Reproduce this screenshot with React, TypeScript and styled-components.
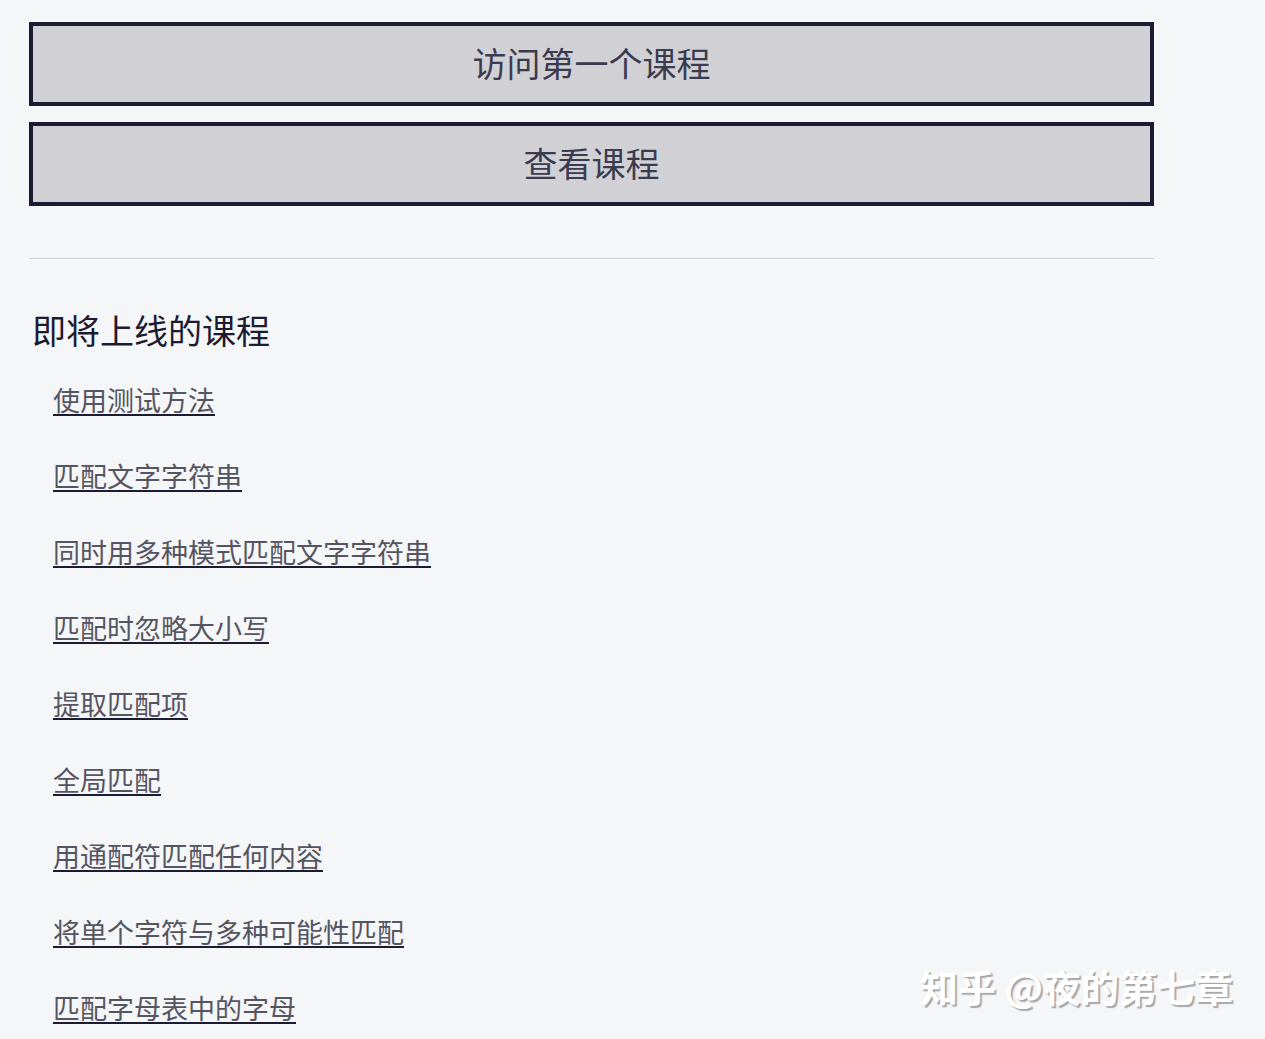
import styled, { createGlobalStyle } from 'styled-components';

const GlobalStyle = createGlobalStyle`
  html, body {
    margin: 0;
    padding: 0;
    background: #f5f6f7;
  }
  body {
    font-family: "Noto Sans CJK SC", "Liberation Serif", serif;
    color: #1b1b32;
  }
`;

const lessons = [
  '使用测试方法',
  '匹配文字字符串',
  '同时用多种模式匹配文字字符串',
  '匹配时忽略大小写',
  '提取匹配项',
  '全局匹配',
  '用通配符匹配任何内容',
  '将单个字符与多种可能性匹配',
  '匹配字母表中的字母',
];

function App() {
  return (
    <Page>
      <GlobalStyle />
      <Main>
        <ButtonGroup>
          <BigButton>访问第一个课程</BigButton>
          <BigButton>查看课程</BigButton>
        </ButtonGroup>
        <Divider />
        <Heading>即将上线的课程</Heading>
        <LessonList>
          {lessons.map((l) => (
            <LessonItem key={l}>
              <LessonLink href="#">{l}</LessonLink>
            </LessonItem>
          ))}
        </LessonList>
      </Main>
      <Watermark>知乎 @夜的第七章</Watermark>
    </Page>
  );
}

export default App;

const Page = styled.div`
  position: relative;
  height: 1039px;
  overflow: hidden;
`;

const Main = styled.main`
  width: 1125px;
  margin-left: 29px;
  padding-top: 22px;
`;

const ButtonGroup = styled.div`
  display: flex;
  flex-direction: column;
  gap: 16px;
`;

const BigButton = styled.button`
  display: flex;
  align-items: center;
  justify-content: center;
  height: 84px;
  width: 100%;
  box-sizing: border-box;
  border: 4px solid #1b1b32;
  background: #d0d0d5;
  color: #3b3b4f;
  font-family: inherit;
  font-size: 34px;
  padding: 0 0 4px 0;
  cursor: pointer;
`;

const Divider = styled.hr`
  border: none;
  border-top: 1px solid #d0d0d5;
  margin: 52px 0 0 0;
`;

const Heading = styled.h2`
  margin: 48px 0 0 3px;
  font-size: 34px;
  font-weight: 400;
  line-height: 46px;
  color: #1b1b32;
`;

const LessonList = styled.ul`
  list-style: none;
  margin: 9px 0 0 0;
  padding: 0 0 0 24px;
  display: flex;
  flex-direction: column;
`;

const LessonItem = styled.li`
  height: 76px;
  display: flex;
  align-items: center;
`;

const LessonLink = styled.a`
  font-size: 27px;
  line-height: 34px;
  color: #555562;
  text-decoration: underline;
  text-decoration-color: #1b1b32;
  text-decoration-thickness: 2px;
  text-underline-offset: 3px;
`;

const Watermark = styled.div`
  position: absolute;
  left: 920px;
  top: 958px;
  font-family: "Noto Sans CJK SC", sans-serif;
  font-size: 38px;
  font-weight: 700;
  color: #ffffff;
  text-shadow: 2px 2px 1px #a8a8ac;
  white-space: nowrap;
`;
